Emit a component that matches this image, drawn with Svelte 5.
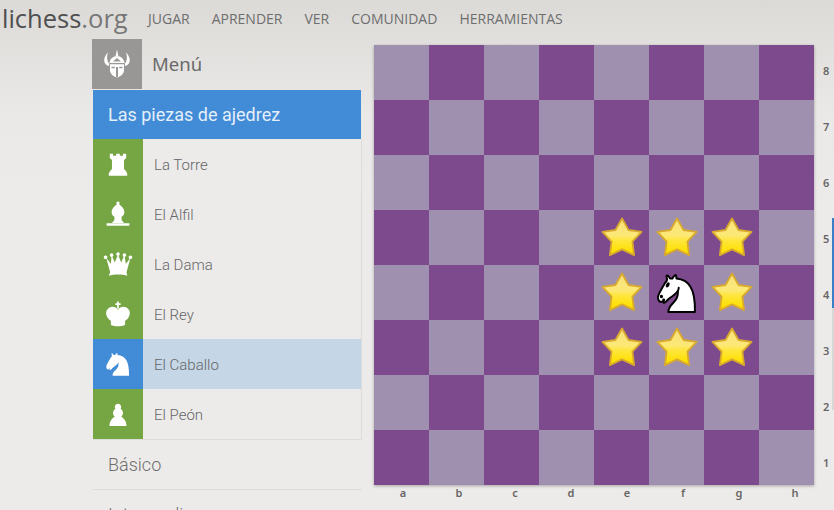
<script lang="ts">
  const nav = ['Jugar', 'Aprender', 'Ver', 'Comunidad', 'Herramientas']

  const PIECES: Record<string, string[]> = {
    rook: ['M9.500 39h26v-3.500l-2.500-4-2-2V17l3-3V8h-4.500v3h-4.500V8h-5v3h-4.500V8H11v6l3 3v12.500l-2 2-2.500 4z'],
    bishop: [
      'M22.500 5a2.300 2.300 0 0 1 1.600 3.900C28 12 31.500 15.500 31.500 20c0 3-1.800 5-4 6.300V31l3.500 4H14l3.500-4v-4.700C15.300 25 13.500 23 13.500 20c0-4.500 3.500-8 7.400-11.100A2.300 2.300 0 0 1 22.500 5z',
      'M6.500 35.500h32V39h-32z'
    ],
    queen: [
      'M5 10.500a2.500 2.500 0 1 0 .01 0zM13.500 7.500a2.500 2.500 0 1 0 .01 0zM22.500 6a2.500 2.500 0 1 0 .01 0zM31.500 7.500a2.500 2.500 0 1 0 .01 0zM40 10.500a2.500 2.500 0 1 0 .01 0z',
      'M9.500 39c7-2.500 19-2.500 26 0l-1-5 5.500-20-6.500 8L31.500 10l-4.500 10.500-4.500-11.500-4.500 11.500L13.500 10l-1 12L6 14l5.500 20z'
    ],
    king: [
      'M21.300 5h2.400v2.500h2.500v2.300h-2.500V15h-2.400V9.800h-2.500V7.500h2.500z',
      'M22.500 17C20 12 14 11.500 10.500 13.500 5.500 16.500 4.500 22 7.500 27c1.500 2.500 3.500 4 5 5v6c5.500 2.500 14.500 2.500 20 0v-6c1.500-1 3.500-2.500 5-5 3-5 2-10.500-3-13.500C31 11.500 25 12 22.500 17z'
    ],
    knight: [
      'M22 10c10.500 1 16.500 8 16 29H15c0-9 10-6.500 8-21',
      'M24 18c.38 2.910-5.550 7.370-8 9-3 2-2.820 4.340-5 4-1.042-.94 1.410-3.040 0-3-1 0 .19 1.230-1 2-1 0-4.003 1-4-4 0-2 6-12 6-12s1.890-1.900 2-3.500c-.73-.994-.5-2-.5-3 1-1 3 2.500 3 2.500h2s.78-1.992 2.500-3c1 0 1 3 1 3'
    ],
    pawn: [
      'M22.500 8c-2.500 0-4.500 2-4.500 4.500 0 1 .3 1.900.9 2.700C17 16.400 15.500 18.500 15.500 21c0 2.100 1 4 2.500 5.200C14.500 28 10.500 32 10.500 39.500h24c0-7.500-4-11.500-7.500-13.300 1.500-1.200 2.500-3.100 2.500-5.200 0-2.500-1.500-4.600-3.400-5.800.6-.8.900-1.700.9-2.700C27 10 25 8 22.500 8z'
    ]
  }

  const lessons = [
    { name: 'La Torre', piece: 'rook' },
    { name: 'El Alfil', piece: 'bishop' },
    { name: 'La Dama', piece: 'queen' },
    { name: 'El Rey', piece: 'king' },
    { name: 'El Caballo', piece: 'knight', active: true },
    { name: 'El Peón', piece: 'pawn' }
  ]

  const files = ['a', 'b', 'c', 'd', 'e', 'f', 'g', 'h']
  const ranks = [8, 7, 6, 5, 4, 3, 2, 1]
  const stars = new Set(['e5', 'f5', 'g5', 'e4', 'g4', 'e3', 'f3', 'g3'])
</script>

<div class="page">
  <header>
    <a class="logo">lichess<span>.org</span></a>
    <nav>
      {#each nav as item}
        <a>{item}</a>
      {/each}
    </nav>
  </header>

  <main>
    <aside>
      <div class="menu-head">
        <div class="helmet">
          <svg width="30" height="30" viewBox="0 0 30 30" fill="#fff" fill-rule="evenodd">
            <path d="M15 .500l1.400 6.500h-2.800z" />
            <path d="M7.500 14c.5-4 3.500-7 7.500-7s7 3 7.500 7zM15 9l-4 3.500h8z" />
            <path d="M6 3.500C2.500 7 1 11.500 3.500 15c1 1.200 2.200 1.800 3.500 2l.2-2.500C5 12.500 4.500 8 6 3.500zM24 3.500c3.500 3.500 5 8 2.500 11.500-1 1.200-2.200 1.800-3.500 2l-.2-2.500C25 12.500 25.500 8 24 3.500z" />
            <path d="M8 15.200h14V21c0 3.500-2.500 6-7 7.500-4.500-1.500-7-4-7-7.500zM14 18v10h2V18zM9.500 17.800v1.400h3.200v-1.400zM17.300 17.800v1.400h3.200v-1.400z" />
          </svg>
        </div>
        <span>Menú</span>
      </div>

      <div class="section-title">Las piezas de ajedrez</div>

      <ul class="lessons">
        {#each lessons as lesson}
          <li class:active={lesson.active}>
            <span class="tile">
              <svg width="32" height="32" viewBox="0 0 45 45" fill="#fff">
                {#each PIECES[lesson.piece] as d}
                  <path {d} />
                {/each}
              </svg>
            </span>
            <span class="lesson-name">{lesson.name}</span>
          </li>
        {/each}
      </ul>

      <div class="category">Básico</div>
      <div class="category">Intermedio</div>
    </aside>

    <section class="board-wrap">
      <div class="board">
        {#each ranks as rank, r}
          {#each files as file, f}
            <div class="square" class:light={(r + f) % 2 === 0}>
              {#if stars.has(file + rank)}
                <svg class="star" width="48" height="48" viewBox="0 0 42 42">
                  <defs>
                    <linearGradient id="star-{file}{rank}" x1="0" y1="0" x2="0" y2="1">
                      <stop offset="0" stop-color="#f8e27c" />
                      <stop offset="0.45" stop-color="#fce878" />
                      <stop offset="0.6" stop-color="#fee63c" />
                      <stop offset="0.9" stop-color="#fee000" />
                    </linearGradient>
                  </defs>
                  <path
                    d="M21 4l5.700 10 11.400 1.700-8 8.400L31.600 36 21 31l-10.600 5 1.500-11.900-8-8.400L15.300 14z"
                    fill="url(#star-{file}{rank})"
                    stroke="#d9a92c"
                    stroke-width="1.600"
                    stroke-linejoin="round"
                  />
                </svg>
              {/if}
              {#if file === 'f' && rank === 4}
                <svg width="52" height="52" viewBox="0 0 45 45" fill="#fff" stroke="#000" stroke-width="1.700" stroke-linecap="round" stroke-linejoin="round">
                  <path d={PIECES.knight[0]} />
                  <path d={PIECES.knight[1]} />
                  <circle cx="9" cy="25.500" r=".6" fill="#000" />
                  <ellipse cx="14.500" cy="15.500" rx=".6" ry="1.500" fill="#000" transform="rotate(30 14.500 15.500)" />
                </svg>
              {/if}
            </div>
          {/each}
        {/each}
      </div>
      <div class="ranks">
        {#each ranks as rank}
          <span>{rank}</span>
        {/each}
      </div>
      <div class="files">
        {#each files as file}
          <span>{file}</span>
        {/each}
      </div>
    </section>
  </main>

  <div class="edge"></div>
</div>

<style>
  :global(body) {
    margin: 0;
    overflow: hidden;
  }

  .page {
    position: relative;
    width: 834px;
    height: 510px;
    overflow: hidden;
    background: linear-gradient(to bottom, #dcdad7 0, #ebe9e7 115px, #edebe9 200px);
    font-family: Roboto, sans-serif;
    color: #5a5a5a;
  }

  header {
    display: flex;
    align-items: flex-start;
    height: 39px;
  }

  .logo {
    width: 148px;
    padding-left: 2px;
    box-sizing: border-box;
    font-family: 'Open Sans', sans-serif;
    font-size: 25.500px;
    line-height: 36px;
    color: #4f4f4f;
    white-space: nowrap;
  }

  .logo span {
    color: #777;
  }

  nav {
    display: flex;
    gap: 22px;
    padding-top: 9px;
  }

  nav a {
    font-family: 'Open Sans', sans-serif;
    font-size: 14px;
    line-height: 20px;
    text-transform: uppercase;
    color: #6e6e6e;
  }

  main {
    display: flex;
    padding-left: 93px;
  }

  aside {
    width: 269px;
    flex-shrink: 0;
  }

  .menu-head {
    display: flex;
    align-items: flex-start;
    gap: 10px;
    height: 51px;
    margin-left: -1px;
    font-family: 'Noto Sans', sans-serif;
    font-size: 18.500px;
    line-height: 50px;
    color: #6a6a6a;
  }

  .helmet {
    display: flex;
    align-items: center;
    justify-content: center;
    width: 50px;
    height: 50px;
    background: #999795;
  }

  .section-title {
    height: 49px;
    padding-left: 15px;
    line-height: 49px;
    width: 268px;
    box-sizing: border-box;
    background: #428bd6;
    color: #e4effa;
    font-size: 18px;
  }

  .lessons {
    list-style: none;
    margin: 0;
    padding: 0;
    width: 269px;
    box-sizing: border-box;
    border-right: 1px solid #dcdcdc;
    border-bottom: 1px solid #dcdcdc;
    background: #ecebea;
  }

  .lessons li {
    display: flex;
    align-items: center;
    gap: 11px;
    height: 50px;
    font-size: 15px;
    font-weight: 300;
    color: #666;
  }

  .lesson-name {
    padding-top: 2px;
  }

  .tile {
    display: flex;
    align-items: center;
    justify-content: center;
    width: 50px;
    height: 50px;
    background: #76a544;
  }

  .lessons li.active {
    background: #c5d6e7;
  }

  .lessons li.active .tile {
    background: #428bd6;
  }

  .category {
    height: 49px;
    padding-left: 15px;
    line-height: 49px;
    border-bottom: 1px solid #dcdcdc;
    font-size: 18px;
    font-weight: 300;
    color: #6e6e6e;
  }

  .board-wrap {
    display: grid;
    grid-template-columns: 440px 20px;
    grid-template-rows: 440px 20px;
    margin: 6px 0 0 12px;
  }

  .board {
    display: grid;
    grid-template-columns: repeat(8, 55px);
    grid-template-rows: repeat(8, 55px);
    box-shadow: 0 1px 3px rgba(0, 0, 0, 0.3);
  }

  .square {
    position: relative;
    display: flex;
    align-items: center;
    justify-content: center;
    background: #7d4a8d;
  }

  .square.light {
    background: #9f90b0;
  }

  .star {
    filter: blur(0.3px);
  }

  .ranks {
    display: grid;
    grid-template-rows: repeat(8, 56px);
    padding-left: 9px;
  }

  .ranks span,
  .files span {
    font-family: 'Noto Sans', sans-serif;
    font-size: 11px;
    font-weight: 600;
    color: #666;
  }

  .ranks span {
    line-height: 52px;
  }

  .files {
    display: grid;
    grid-template-columns: repeat(8, 56px);
    padding-left: 1px;
    text-align: center;
    line-height: 16px;
  }

  .edge {
    position: absolute;
    top: 218px;
    right: 0;
    width: 2px;
    height: 192px;
    background: linear-gradient(to bottom, #3b7fc4 0, #3b7fc4 90px, #d8d8d8 90px);
  }
</style>
